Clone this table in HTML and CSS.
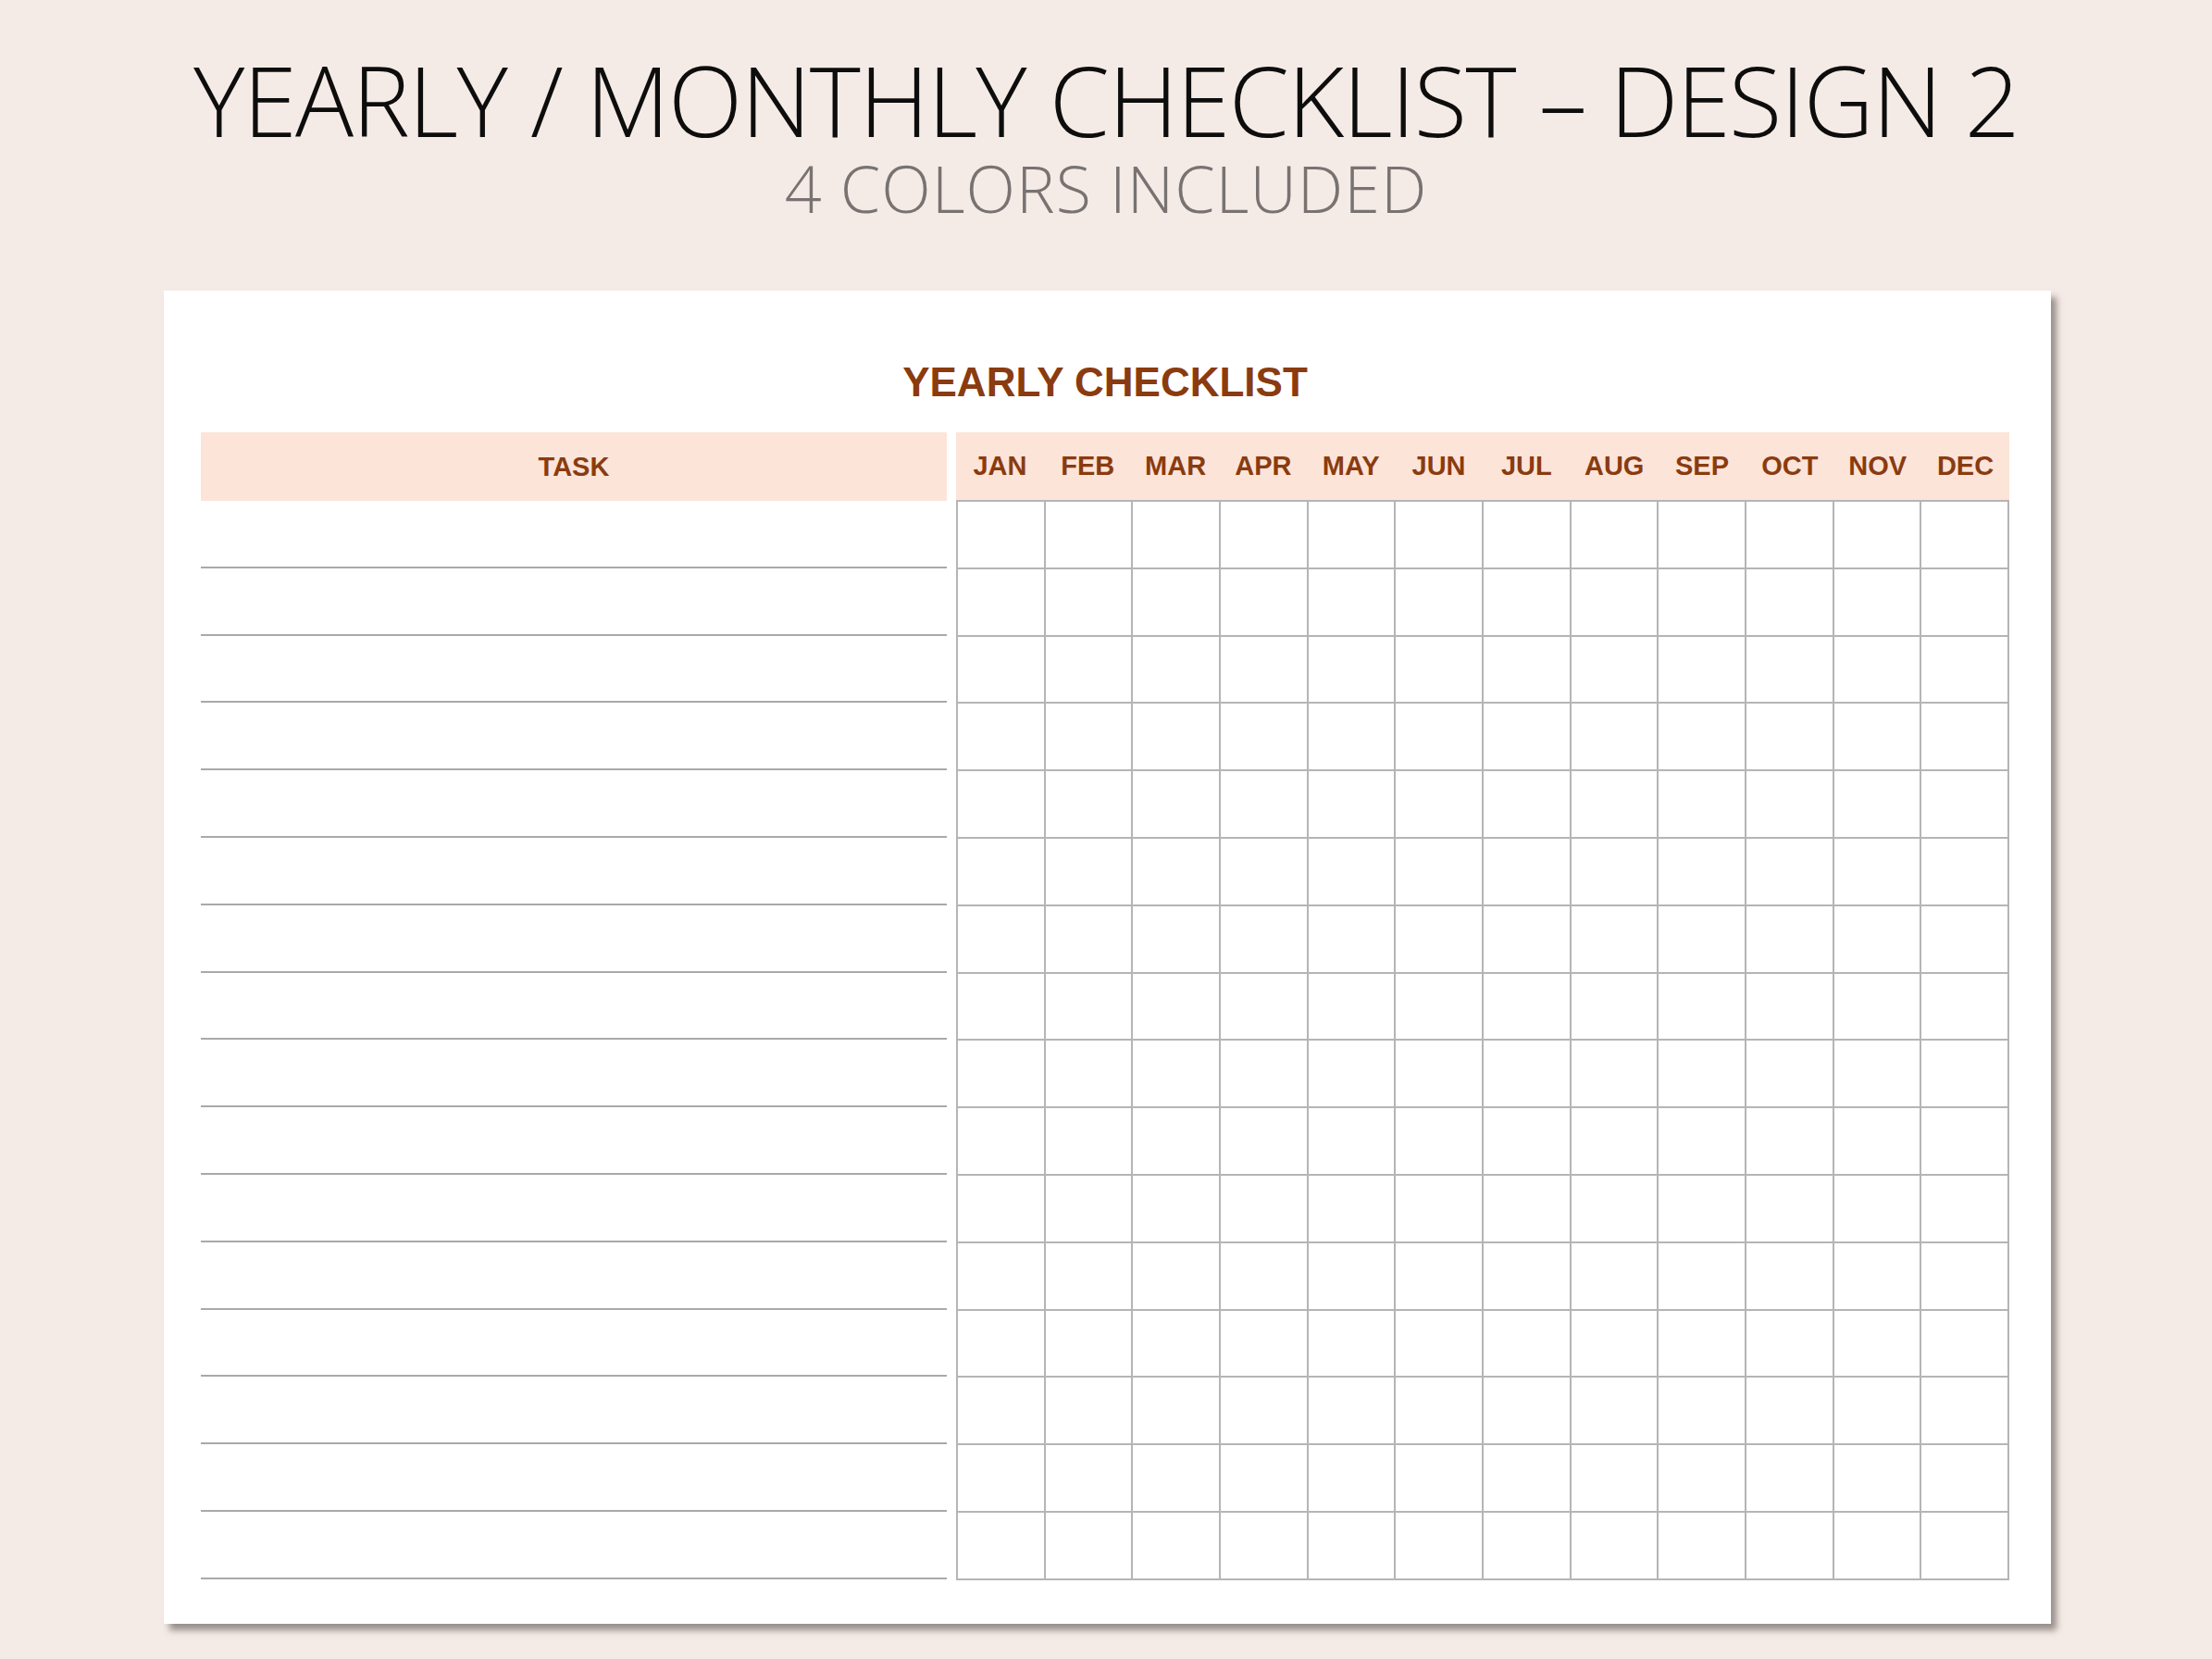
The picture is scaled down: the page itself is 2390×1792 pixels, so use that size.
FILE: index.html
```html
<!DOCTYPE html>
<html lang="en">
<head>
<meta charset="utf-8">
<title>Yearly / Monthly Checklist – Design 2</title>
<link rel="stylesheet" href="styles.css">
</head>
<body>
<header class="banner">
  <h1 class="banner-title">YEARLY / MONTHLY CHECKLIST – DESIGN 2</h1>
  <p class="banner-sub">4 COLORS INCLUDED</p>
</header>
<main class="sheet">
  <h2 class="sheet-title">YEARLY CHECKLIST</h2>
  <div class="table">
    <section class="task-col">
      <div class="head task-head">TASK</div>
      <div class="task-rows">
        <div class="task-row"></div><div class="task-row"></div><div class="task-row"></div><div class="task-row"></div>
        <div class="task-row"></div><div class="task-row"></div><div class="task-row"></div><div class="task-row"></div>
        <div class="task-row"></div><div class="task-row"></div><div class="task-row"></div><div class="task-row"></div>
        <div class="task-row"></div><div class="task-row"></div><div class="task-row"></div><div class="task-row"></div>
      </div>
    </section>
    <section class="month-col">
      <div class="head month-head">
        <span>JAN</span><span>FEB</span><span>MAR</span><span>APR</span><span>MAY</span><span>JUN</span>
        <span>JUL</span><span>AUG</span><span>SEP</span><span>OCT</span><span>NOV</span><span>DEC</span>
      </div>
      <div class="grid">
        <i></i><i></i><i></i><i></i><i></i><i></i><i></i><i></i><i></i><i></i><i></i><i></i>
        <i></i><i></i><i></i><i></i><i></i><i></i><i></i><i></i><i></i><i></i><i></i><i></i>
        <i></i><i></i><i></i><i></i><i></i><i></i><i></i><i></i><i></i><i></i><i></i><i></i>
        <i></i><i></i><i></i><i></i><i></i><i></i><i></i><i></i><i></i><i></i><i></i><i></i>
        <i></i><i></i><i></i><i></i><i></i><i></i><i></i><i></i><i></i><i></i><i></i><i></i>
        <i></i><i></i><i></i><i></i><i></i><i></i><i></i><i></i><i></i><i></i><i></i><i></i>
        <i></i><i></i><i></i><i></i><i></i><i></i><i></i><i></i><i></i><i></i><i></i><i></i>
        <i></i><i></i><i></i><i></i><i></i><i></i><i></i><i></i><i></i><i></i><i></i><i></i>
        <i></i><i></i><i></i><i></i><i></i><i></i><i></i><i></i><i></i><i></i><i></i><i></i>
        <i></i><i></i><i></i><i></i><i></i><i></i><i></i><i></i><i></i><i></i><i></i><i></i>
        <i></i><i></i><i></i><i></i><i></i><i></i><i></i><i></i><i></i><i></i><i></i><i></i>
        <i></i><i></i><i></i><i></i><i></i><i></i><i></i><i></i><i></i><i></i><i></i><i></i>
        <i></i><i></i><i></i><i></i><i></i><i></i><i></i><i></i><i></i><i></i><i></i><i></i>
        <i></i><i></i><i></i><i></i><i></i><i></i><i></i><i></i><i></i><i></i><i></i><i></i>
        <i></i><i></i><i></i><i></i><i></i><i></i><i></i><i></i><i></i><i></i><i></i><i></i>
        <i></i><i></i><i></i><i></i><i></i><i></i><i></i><i></i><i></i><i></i><i></i><i></i>
      </div>
    </section>
  </div>
</main>
</body>
</html>
```

FILE: styles.css
```css
* { box-sizing: border-box; }
html, body { margin: 0; padding: 0; }
body {
  width: 2390px;
  height: 1792px;
  background: #f5ebe6;
  display: flex;
  flex-direction: column;
  align-items: center;
  padding-top: 55px;
  overflow: hidden;
}
.banner {
  display: flex;
  flex-direction: column;
  align-items: center;
}
.banner-title {
  margin: 0;
  font-family: "Open Sans", "DejaVu Sans", sans-serif;
  font-weight: 350;
  font-stretch: 100%;
  font-size: 105px;
  line-height: 105px;
  letter-spacing: -1.6px;
  color: #0d0d0d;
  white-space: nowrap;
}
.banner-sub {
  margin: 8px 0 0;
  font-family: "Open Sans", "DejaVu Sans", sans-serif;
  font-weight: 300;
  font-stretch: 100%;
  font-size: 70px;
  line-height: 70px;
  letter-spacing: 1px;
  color: #787372;
  white-space: nowrap;
}
.sheet {
  margin-top: 76px;
  margin-left: 3px;
  width: 2039px;
  height: 1440px;
  background: #ffffff;
  box-shadow: 6px 7px 7px rgba(90, 80, 78, 0.6);
  padding: 74px 45px 0 40px;
  display: flex;
  flex-direction: column;
}
.sheet-title {
  margin: 0;
  height: 50px;
  font-family: "Liberation Sans", Arial, sans-serif;
  font-weight: 700;
  font-size: 44px;
  line-height: 50px;
  text-align: center;
  color: #8a3b0f;
}
.table {
  margin-top: 29px;
  display: flex;
  gap: 10px;
}
.head {
  height: 74px;
  background: #fce4d8;
  font-family: "Liberation Sans", Arial, sans-serif;
  font-weight: 700;
  font-size: 29px;
  color: #8a3b0f;
  display: flex;
  align-items: center;
}
.task-col { width: 806px; }
.task-head { justify-content: center; }
.task-row {
  height: 72.8px;
  border-bottom: 2.5px solid #a9a9a9;
}
.month-col { flex: 1; }
.month-head { height: 73px; }
.month-head span {
  flex: 1;
  text-align: center;
}
.grid {
  display: grid;
  grid-template-columns: repeat(12, 1fr);
  grid-auto-rows: 72.8px;
  border-top: 2px solid #b5b5b5;
  border-left: 2px solid #b5b5b5;
}
.grid i {
  border-right: 2px solid #b5b5b5;
  border-bottom: 2px solid #b5b5b5;
}
```
